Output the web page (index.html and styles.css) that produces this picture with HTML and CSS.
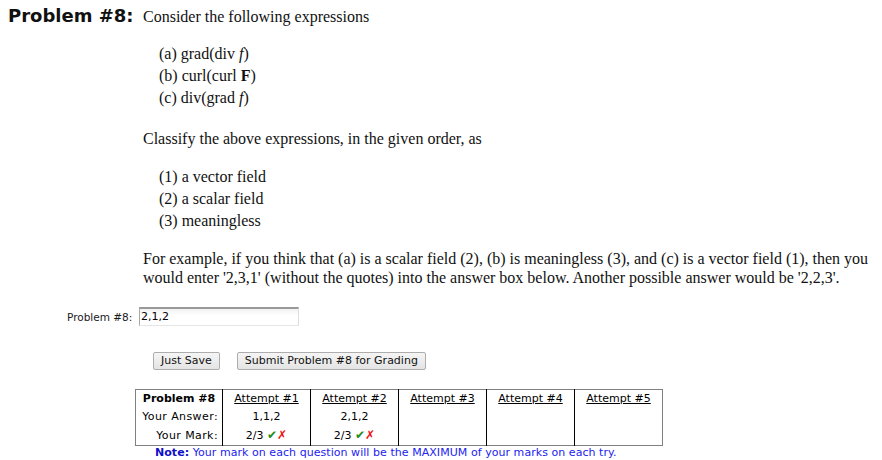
FILE: index.html
```html
<!DOCTYPE html>
<html>
<head>
<meta charset="utf-8">
<link rel="stylesheet" href="styles.css">
</head>
<body>
<div class="problem">
  <div class="heading">Problem #8:</div>
  <div class="body">
    <p class="intro">Consider the following expressions</p>
    <div class="list list-a">
      <div>(a) grad(div <i>f</i>)</div>
      <div>(b) curl(curl <b>F</b>)</div>
      <div>(c) div(grad <i>f</i>)</div>
    </div>
    <p class="para para-a">Classify the above expressions, in the given order, as</p>
    <div class="list list-b">
      <div>(1) a vector field</div>
      <div>(2) a scalar field</div>
      <div>(3) meaningless</div>
    </div>
    <p class="para para-b">For example, if you think that (a) is a scalar field (2), (b) is meaningless (3), and (c) is a vector field (1), then you would enter '2,3,1' (without the quotes) into the answer box below. Another possible answer would be '2,2,3'.</p>
  </div>
</div>

<div class="answer-row">
  <span class="label">Problem #8:</span>
  <span class="input">2,1,2</span>
</div>

<div class="buttons">
  <span class="btn">Just Save</span>
  <span class="btn">Submit Problem #8 for Grading</span>
</div>

<table class="attempts">
  <tr>
    <th class="first">Problem #8</th>
    <td class="head">Attempt #1</td>
    <td class="head">Attempt #2</td>
    <td class="head">Attempt #3</td>
    <td class="head">Attempt #4</td>
    <td class="head">Attempt #5</td>
  </tr>
  <tr>
    <th class="rlabel">Your Answer:</th>
    <td>1,1,2</td>
    <td>2,1,2</td>
    <td></td>
    <td></td>
    <td></td>
  </tr>
  <tr>
    <th class="rlabel">Your Mark:</th>
    <td>2/3 <span class="ok">✔</span><span class="bad">✗</span></td>
    <td>2/3 <span class="ok">✔</span><span class="bad">✗</span></td>
    <td></td>
    <td></td>
    <td></td>
  </tr>
</table>
<div class="note"><b>Note:</b> Your mark on each question will be the MAXIMUM of your marks on each try.</div>
</body>
</html>
```

FILE: styles.css
```css
html, body {
  margin: 0;
  padding: 0;
  background: #fff;
}
body {
  font-family: "DejaVu Sans", Verdana, sans-serif;
  color: #000;
}
.problem {
  display: flex;
  align-items: flex-start;
  padding-left: 8px;
  padding-top: 5px;
  width: 866px;
}
.heading {
  font-weight: bold;
  font-size: 18px;
  line-height: 22px;
  width: 135px;
  flex: none;
  color: #111;
}
.body {
  font-family: "Liberation Serif", "Times New Roman", serif;
  font-size: 16px;
  line-height: 19px;
  color: #111;
  flex: 1;
}
.body p {
  margin: 0;
}
.intro {
  padding-top: 2px;
}
.list {
  margin-left: 16px;
  line-height: 22px;
}
.list-a {
  margin-top: 17px;
}
.list-b {
  margin-top: 18px;
}
.body .para-a {
  margin-top: 20px;
}
.body .para-b {
  margin-top: 17px;
}
.answer-row {
  display: flex;
  align-items: center;
  margin-top: 20px;
  padding-left: 67px;
  font-size: 10.5px;
}
.label {
  color: #1a1a1a;
  width: 72px;
}
.input {
  display: block;
  box-sizing: border-box;
  width: 160px;
  height: 19px;
  border-style: solid;
  border-width: 2px 1px 1px 1px;
  border-color: #999 #ddd #e6e6e6 #aaa;
  background: linear-gradient(#f2f2f2, #fff 40%);
  font-size: 11px;
  line-height: 16px;
  padding-left: 1px;
}
.buttons {
  display: flex;
  gap: 17px;
  margin-top: 26px;
  padding-left: 153px;
}
.btn {
  display: block;
  box-sizing: border-box;
  height: 18px;
  padding: 0 7px;
  border: 1px solid #adadad;
  border-radius: 2px;
  background: linear-gradient(#f5f5f5, #e4e4e4);
  font-size: 11px;
  line-height: 16px;
  color: #111;
}
.attempts {
  margin-top: 19px;
  margin-left: 135px;
  border-collapse: collapse;
  border: 1px solid #808080;
  font-size: 11px;
}
.attempts th, .attempts td {
  padding: 0;
  height: 18px;
  line-height: 18px;
  font-weight: normal;
}
.attempts td {
  width: 87px;
  text-align: center;
  border-left: 1px solid #000;
}
.attempts th.first {
  width: 86px;
  font-weight: bold;
  text-align: center;
}
.attempts th.rlabel {
  text-align: right;
  padding-right: 4px;
  letter-spacing: 0.4px;
}
.attempts td.head {
  text-decoration: underline;
}
.ok {
  color: #1e8c1e;
  font-weight: bold;
  font-size: 12px;
}
.bad {
  color: #ee1111;
  font-size: 12px;
}
.note {
  margin-left: 155px;
  font-size: 11px;
  line-height: 13px;
  color: #2323f0;
  letter-spacing: 0.05px;
}
.note b {
  color: #1010c8;
}
```
